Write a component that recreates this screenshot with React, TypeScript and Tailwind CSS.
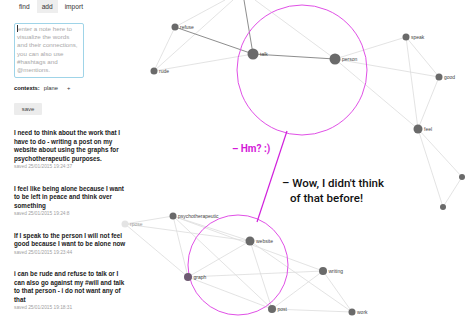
import React from "react";

type N = { id: string; x: number; y: number; r: number; label?: string; faded?: boolean; fill?: string };

const nodes: N[] = [
  { id: "refuse", x: 175, y: 27, r: 3.5, label: "refuse" },
  { id: "rude", x: 154, y: 71, r: 3.5, label: "rude" },
  { id: "talk", x: 253, y: 54, r: 5.5, label: "talk" },
  { id: "person", x: 335, y: 59, r: 5.5, label: "person" },
  { id: "speak", x: 406, y: 37, r: 3.5, label: "speak" },
  { id: "good", x: 439, y: 77, r: 3.5, label: "good" },
  { id: "feel", x: 418, y: 129, r: 4.5, label: "feel" },
  { id: "a", x: 462, y: 177, r: 3 },
  { id: "b", x: 443, y: 207, r: 3 },
  { id: "rpose", x: 125, y: 224, r: 3.5, label: "rpose", faded: true },
  { id: "psych", x: 173, y: 216, r: 3.5, label: "psychotherapeutic" },
  { id: "website", x: 250, y: 241, r: 4.5, label: "website" },
  { id: "graph", x: 188, y: 277, r: 4, label: "graph", fill: "#6e5a72" },
  { id: "post", x: 272, y: 309, r: 4, label: "post" },
  { id: "writing", x: 323, y: 271, r: 4, label: "writing" },
  { id: "work", x: 352, y: 312, r: 3.5, label: "work" },
];

const byId = (id: string) => nodes.find((n) => n.id === id)!;

const light: [string, string][] = [
  ["refuse", "rude"],
  ["rude", "talk"],
  ["person", "speak"],
  ["person", "good"],
  ["person", "feel"],
  ["speak", "good"],
  ["speak", "feel"],
  ["good", "feel"],
  ["feel", "a"],
  ["feel", "b"],
  ["a", "b"],
  ["rpose", "psych"],
  ["rpose", "website"],
  ["rpose", "graph"],
  ["psych", "website"],
  ["psych", "graph"],
  ["psych", "post"],
  ["psych", "writing"],
  ["website", "graph"],
  ["website", "post"],
  ["website", "work"],
  ["graph", "writing"],
  ["graph", "post"],
  ["post", "writing"],
  ["post", "work"],
  ["writing", "work"],
];

const dark: [string, string][] = [
  ["refuse", "talk"],
  ["talk", "person"],
];

const notes = [
  {
    text: "I need to think about the work that I have to do - writing a post on my website about using the graphs for psychotherapeutic purposes.",
    saved: "saved 25/01/2015 19:24:37",
  },
  {
    text: "I feel like being alone because I want to be left in peace and think over something",
    saved: "saved 25/01/2015 19:24:8",
  },
  {
    text: "If I speak to the person I will not feel good because I want to be alone now",
    saved: "saved 25/01/2015 19:23:44",
  },
  {
    text: "i can be rude and refuse to talk or I can also go against my #will and talk to that person - i do not want any of that",
    saved: "saved 25/01/2015 19:18:31",
  },
];

function Graph() {
  return (
    <svg className="absolute inset-0" width={474} height={320} viewBox="0 0 474 320">
      <line x1={225} y1={0} x2={175} y2={27} stroke="#dcdcdc" strokeWidth={0.8} />
      <line x1={233} y1={0} x2={154} y2={71} stroke="#dcdcdc" strokeWidth={0.8} />
      <line x1={255} y1={0} x2={335} y2={59} stroke="#dcdcdc" strokeWidth={0.8} />
      <line x1={244} y1={0} x2={253} y2={54} stroke="#808080" strokeWidth={0.9} />
      {light.map(([a, b], i) => {
        const p = byId(a);
        const q = byId(b);
        return <line key={"l" + i} x1={p.x} y1={p.y} x2={q.x} y2={q.y} stroke="#dcdcdc" strokeWidth={0.8} />;
      })}
      {dark.map(([a, b], i) => {
        const p = byId(a);
        const q = byId(b);
        return <line key={"d" + i} x1={p.x} y1={p.y} x2={q.x} y2={q.y} stroke="#808080" strokeWidth={0.9} />;
      })}
      <circle cx={302} cy={70} r={65} fill="none" stroke="#e050e6" strokeWidth={1} />
      <circle cx={238} cy={265} r={50} fill="none" stroke="#e050e6" strokeWidth={1} />
      <line x1={287} y1={131} x2={257} y2={222} stroke="#d020dc" strokeWidth={1.2} />
      {nodes.map((n) => (
        <g key={n.id}>
          <circle cx={n.x} cy={n.y} r={n.r} fill={n.faded ? "#e4e4e4" : n.fill ?? "#6a6a6a"} />
          {n.label && (
            <text
              x={n.x + n.r + 1.5}
              y={n.y + 1.7}
              fontSize={5}
              fill={n.faded ? "#9a9a9a" : "#444"}
              style={{ fontFamily: '"Liberation Sans", Arial, sans-serif' }}
            >
              {n.label}
            </text>
          )}
        </g>
      ))}
    </svg>
  );
}

export default function App() {
  return (
    <div className="relative w-[474px] h-[320px] overflow-hidden bg-white font-['Liberation_Sans',Arial,sans-serif]">
      <Graph />
      <div className="absolute left-[232px] top-[144px] text-[10px] font-bold leading-none text-[#d41ad8] font-['Roboto',sans-serif]">
        – Hm? :)
      </div>
      <div className="absolute left-[282px] top-[176px] text-[11.5px] font-medium leading-[15px] text-[#111] font-['Roboto',sans-serif]">
        <div>– Wow, I didn't think</div>
        <div className="pl-[8px]">of that before!</div>
      </div>

      <div className="relative z-10 w-[128px] flex flex-col pl-[14px] text-[#222]">
        <div className="flex items-start text-[6.6px] leading-none text-[#333] h-[14px]">
          <div className="pl-[5px] pr-[5px] pt-[4px]">find</div>
          <div className="px-[5px] pt-[4px] ml-[2px] bg-[#eeeeee] h-[13px]">add</div>
          <div className="px-[5px] pt-[4px] ml-[2px]">import</div>
        </div>
        <div className="mt-[9px] w-[70px] h-[55px] shrink-0 border border-[#9fd4e8] rounded-[2px] pl-[2px] pt-[1px] text-[6.2px] leading-[8.2px] text-[#a8a8a8]">
          <span className="border-l border-[#333]">enter a note here to</span>
          <br />
          visualize the words
          <br />
          and their connections,
          <br />
          you can also use
          <br />
          #hashtags and
          <br />
          @mentions.
        </div>
        <div className="mt-[7px] flex items-center text-[5.8px] leading-none h-[8px]">
          <span className="font-bold text-[#111]">contexts:</span>
          <span className="ml-[4px] text-[#333]">plane</span>
          <span className="ml-[9px] text-[#333]">+</span>
        </div>
        <div className="mt-[10px] w-[28px] h-[12px] shrink-0 bg-[#ececec] rounded-[1px] flex items-center justify-center text-[6px] text-[#444]">
          save
        </div>
        <div className="mt-[14px] w-[114px] shrink-0 flex flex-col gap-[14px]">
          {notes.map((n, i) => (
            <div key={i} className="flex flex-col">
              <div className="text-[6.3px] font-bold leading-[8.5px] text-[#1a1a1a]">{n.text}</div>
              <div className="text-[4.8px] leading-[7.5px] text-[#a0a0a0]">{n.saved}</div>
            </div>
          ))}
        </div>
      </div>
    </div>
  );
}
